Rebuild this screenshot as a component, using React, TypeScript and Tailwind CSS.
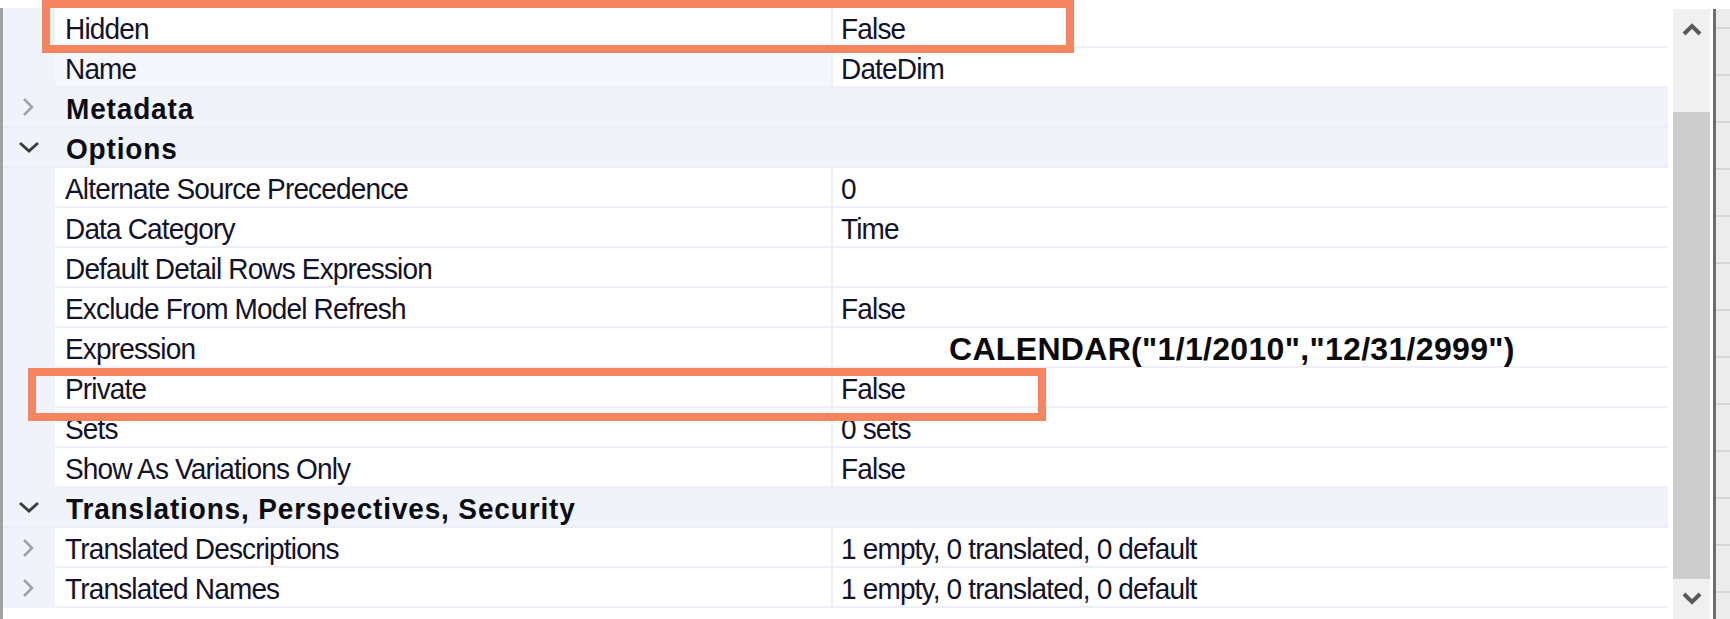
import React from 'react';

type Row =
  | { kind: 'cat'; label: string; open: boolean }
  | { kind: 'prop'; label: string; value: string; shaded?: boolean; sub?: boolean; big?: boolean };

const rows: Row[] = [
  { kind: 'prop', label: 'Hidden', value: 'False' },
  { kind: 'prop', label: 'Name', value: 'DateDim', shaded: true },
  { kind: 'cat', label: 'Metadata', open: false },
  { kind: 'cat', label: 'Options', open: true },
  { kind: 'prop', label: 'Alternate Source Precedence', value: '0' },
  { kind: 'prop', label: 'Data Category', value: 'Time' },
  { kind: 'prop', label: 'Default Detail Rows Expression', value: '' },
  { kind: 'prop', label: 'Exclude From Model Refresh', value: 'False' },
  { kind: 'prop', label: 'Expression', value: 'CALENDAR("1/1/2010","12/31/2999")', big: true },
  { kind: 'prop', label: 'Private', value: 'False' },
  { kind: 'prop', label: 'Sets', value: '0 sets' },
  { kind: 'prop', label: 'Show As Variations Only', value: 'False' },
  { kind: 'cat', label: 'Translations, Perspectives, Security', open: true },
  { kind: 'prop', label: 'Translated Descriptions', value: '1 empty, 0 translated, 0 default', sub: true },
  { kind: 'prop', label: 'Translated Names', value: '1 empty, 0 translated, 0 default', sub: true },
];

const Closed = () => (
  <svg width="14" height="22" viewBox="0 0 14 22" className="ml-[18px]">
    <polyline points="3,3 11,11 3,19" fill="none" stroke="#a3a3a3" strokeWidth="2.6" />
  </svg>
);

const Open = () => (
  <svg width="22" height="14" viewBox="0 0 22 14" className="ml-[15px]">
    <polyline points="2,3 11,11 20,3" fill="none" stroke="#3c3c3c" strokeWidth="3" />
  </svg>
);

const PropRow: React.FC<{ row: Row }> = ({ row }) => {
  if (row.kind === 'cat') {
    return (
      <div className="flex h-[40px] items-center bg-[#f0f4fa] border-b-2 border-[#e9eef5]">
        <div className="w-[52px] flex items-center">{row.open ? <Open /> : <Closed />}</div>
        <span className="inline-block pl-[11px] pt-[3px] scale-y-[1.08] text-[28px] font-bold tracking-[0.03em] text-[#0b0b14]">
          {row.label}
        </span>
      </div>
    );
  }
  return (
    <div className="flex h-[40px]">
      <div className="w-[52px] flex items-center bg-[#f0f4fa]">{row.sub && <Closed />}</div>
      <div
        className={`w-[778px] flex items-center pl-[10px] pt-[3px] border-b-2 border-r-2 border-[#edf1f7] ${
          row.shaded ? 'bg-[#f4f7fb]' : 'bg-white'
        }`}
      >
        <span className="inline-block scale-y-[1.08] text-[28px] tracking-[-0.03em] text-[#12122a]">{row.label}</span>
      </div>
      <div className="flex-1 flex items-center pl-[8px] pt-[3px] bg-white border-b-2 border-[#edf1f7]">
        {row.big ? (
          <span className="inline-block pl-[108px] text-[32px] font-bold tracking-[0.01em] text-[#0a0a0a]">
            {row.value}
          </span>
        ) : (
          <span className="inline-block scale-y-[1.08] text-[28px] tracking-[-0.03em] text-[#12122a]">{row.value}</span>
        )}
      </div>
    </div>
  );
};

const ScrollArrow: React.FC<{ up?: boolean }> = ({ up }) => (
  <div className="h-[40px] flex items-center justify-center">
    <svg width="20" height="14" viewBox="0 0 20 14">
      {up ? (
        <polyline points="2,12 10,4 18,12" fill="none" stroke="#5a5a5a" strokeWidth="4" />
      ) : (
        <polyline points="2,2 10,10 18,2" fill="none" stroke="#5a5a5a" strokeWidth="4" />
      )}
    </svg>
  </div>
);

export default function App() {
  return (
    <div
      className="relative w-[1730px] h-[619px] bg-white flex overflow-hidden"
      style={{ fontFamily: '"Liberation Sans", Arial, sans-serif' }}
    >
      {/* property grid */}
      <div className="w-[1673px] pt-[8px] pr-[5px]">
        <div className="border-l-[3px] border-[#a2a2a2]">
          {rows.map((r, i) => (
            <PropRow key={i} row={r} />
          ))}
          <div className="h-[12px] bg-white" />
        </div>
      </div>

      {/* vertical scrollbar */}
      <div className="w-[37px] mt-[9px] bg-[#f0f0f0] flex flex-col">
        <ScrollArrow up />
        <div className="mt-[63px] h-[470px] bg-[#cdcdcd]" />
        <div className="mt-auto">
          <ScrollArrow />
        </div>
      </div>

      <div className="w-[3px] ml-[3px] mt-[9px] bg-[#6e6e6e]" />

      {/* neighbouring pane */}
      <div className="flex-1 mt-[9px] bg-[#ececec] flex flex-col">
        <div className="h-[20px] border-b-2 border-[#d6d6d6]" />
        {Array.from({ length: 12 }).map((_, i) => (
          <div key={i} className="h-[47px] shrink-0 border-b-2 border-[#d6d6d6]" />
        ))}
      </div>

      {/* highlight boxes */}
      <div className="absolute left-[42px] top-0 w-[1032px] h-[53px] border-[8px] border-[#f5855f]" />
      <div className="absolute left-[28px] top-[368px] w-[1018px] h-[53px] border-[8px] border-[#f5855f]" />
    </div>
  );
}
